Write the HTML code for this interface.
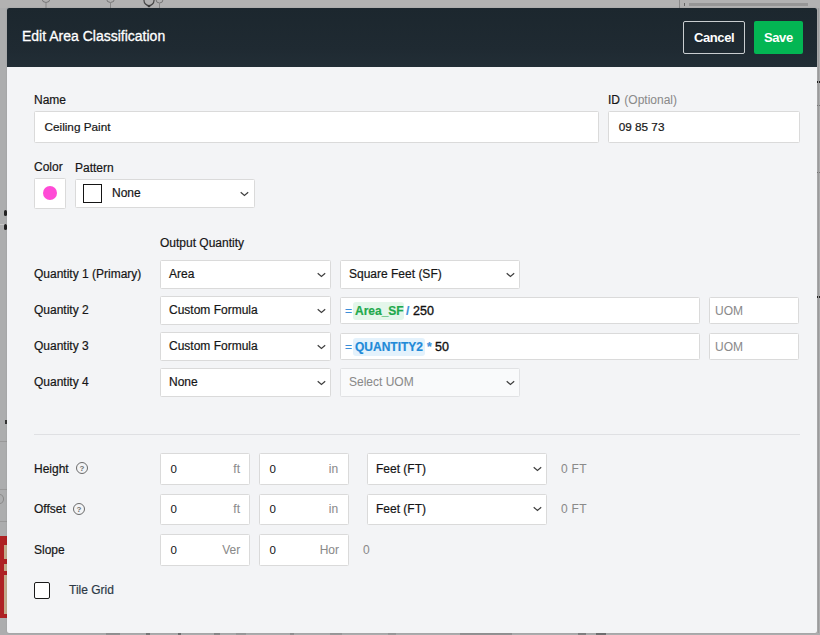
<!DOCTYPE html>
<html><head><meta charset="utf-8">
<style>
*{box-sizing:border-box;margin:0;padding:0}
html,body{width:820px;height:635px;overflow:hidden;background:#acadae;font-family:"Liberation Sans",sans-serif;color:#161616}
.a{position:absolute}
.t{position:absolute;white-space:nowrap;font-size:12px;line-height:12px;-webkit-text-stroke:0.2px currentColor}
.modal{position:absolute;left:7px;top:8px;width:810px;height:625px;background:#f3f4f6;border-radius:2px;overflow:hidden;box-shadow:0 0 1.5px rgba(0,0,0,.18)}
.hdr{position:absolute;left:0;top:0;width:810px;height:59px;background:linear-gradient(#1c272e,#1f2a32 70%,#222e36)}
.box{position:absolute;background:#fff;border:1px solid #dadada;border-radius:1.5px}
.chev{position:absolute;width:10px;height:6px}
.gray{color:#8a8a8a;-webkit-text-stroke:0.05px #8a8a8a}
</style></head><body>
<!-- background blueprint hints -->
<div class="a" style="left:5px;top:420px;width:2px;height:4px;background:#333"></div>
<div class="a" style="left:0;top:441px;width:7px;height:1px;background:#999"></div>
<div class="a" style="left:0;top:489px;width:7px;height:1px;background:#999"></div>
<div class="a" style="left:-5px;top:494px;width:9px;height:10px;border:1px solid #888;border-radius:50%"></div>
<div class="a" style="left:0;top:521px;width:7px;height:1px;background:#999"></div>
<div class="a" style="left:0;top:0;width:820px;height:8px;background:#b2b2b2"></div>
<div class="a" style="left:106px;top:633px;width:14px;height:2px;background:#777;opacity:.5"></div>
<div class="a" style="left:146px;top:633px;width:4px;height:2px;background:#444;opacity:.5"></div>
<div class="a" style="left:178px;top:633px;width:3px;height:2px;background:#333;opacity:.5"></div>
<div class="a" style="left:214px;top:633px;width:6px;height:2px;background:#666;opacity:.5"></div>
<div class="a" style="left:236px;top:633px;width:10px;height:2px;background:#888;opacity:.5"></div>
<div class="a" style="left:290px;top:633px;width:4px;height:2px;background:#777;opacity:.5"></div>
<div class="a" style="left:330px;top:633px;width:12px;height:2px;background:#888;opacity:.5"></div>
<div class="a" style="left:388px;top:633px;width:8px;height:2px;background:#888;opacity:.5"></div>
<div class="a" style="left:460px;top:633px;width:52px;height:2px;background:#7a7a7a;opacity:.5"></div>
<div class="a" style="left:578px;top:633px;width:8px;height:2px;background:#555;opacity:.5"></div>
<div class="a" style="left:596px;top:633px;width:10px;height:2px;background:#333;opacity:.5"></div>
<div class="a" style="left:0;top:536px;width:7px;height:82px;background:#ae2123"></div>
<div class="a" style="left:4px;top:545px;width:3px;height:14px;background:#c2ab8b"></div>
<div class="a" style="left:4px;top:564px;width:3px;height:7px;background:#c2ab8b"></div>
<div class="a" style="left:4px;top:575px;width:3px;height:39px;background:#c2ab8b"></div>
<div class="a" style="left:0;top:224px;width:7px;height:1px;background:#c8c8c8"></div>
<div class="a" style="left:4px;top:210px;width:3px;height:6px;background:#222;border-radius:2px"></div>
<div class="a" style="left:4px;top:224px;width:3px;height:6px;background:#222;border-radius:2px"></div>
<div class="a" style="left:679px;top:0;width:1px;height:8px;background:#8a8a8a"></div>
<div class="a" style="left:684px;top:3px;width:1px;height:3px;background:#666"></div>
<div class="a" style="left:689px;top:3px;width:119px;height:3px;background:#8a8a8a;opacity:.7"></div>
<svg class="a" style="left:38px;top:0" width="16" height="8"><circle cx="8" cy="-1.5" r="4" fill="none" stroke="#777" stroke-width="1"/><line x1="8" y1="2.5" x2="8" y2="8" stroke="#888" stroke-width="1"/></svg>
<svg class="a" style="left:102px;top:0" width="16" height="8"><circle cx="8.5" cy="-1.5" r="4" fill="none" stroke="#777" stroke-width="1"/><line x1="8.5" y1="2.5" x2="8.5" y2="8" stroke="#888" stroke-width="1"/><circle cx="-2" cy="5" r="1" fill="#777"/></svg>
<svg class="a" style="left:138px;top:0" width="30" height="8"><circle cx="11" cy="0.5" r="5" fill="none" stroke="#444" stroke-width="1.2"/><path d="M8.5 5.5 L11 7.5 L13.5 5.5Z" fill="#333"/><circle cx="21.5" cy="-0.5" r="3.5" fill="none" stroke="#777" stroke-width="1"/><line x1="21.5" y1="3" x2="21.5" y2="8" stroke="#888" stroke-width="1"/></svg>
<div class="a" style="left:817px;top:81px;width:3px;height:2px;background:#222"></div>
<div class="a" style="left:817px;top:105px;width:3px;height:1px;background:#777"></div>
<div class="a" style="left:817px;top:172px;width:3px;height:1px;background:#777"></div>
<div class="a" style="left:817px;top:296px;width:3px;height:2px;background:#222"></div>
<div class="a" style="left:818px;top:8px;width:1px;height:625px;background:#9c9c9d"></div>


<div class="modal">
  <div class="hdr"></div>
</div>

<!-- header content (absolute page coords) -->
<div class="t" style="left:22px;top:29.3px;font-size:14px;line-height:14px;color:#fff;-webkit-text-stroke:0.3px #fff">Edit Area Classification</div>
<div class="a" style="left:683px;top:21px;width:62px;height:33px;border:1px solid #c9cdd0;border-radius:2px"></div>
<div class="t" style="left:694px;top:30.7px;font-size:13px;line-height:13px;font-weight:bold;color:#fff;letter-spacing:-0.4px;-webkit-text-stroke:0">Cancel</div>
<div class="a" style="left:754px;top:21px;width:49px;height:33px;background:#03b653;border-radius:2px"></div>
<div class="t" style="left:764px;top:30.7px;font-size:13px;line-height:13px;font-weight:bold;color:#fff;letter-spacing:-0.4px;-webkit-text-stroke:0">Save</div>

<!-- Name / ID -->
<div class="t" style="left:34px;top:93.7px">Name</div>
<div class="box" style="left:34px;top:111px;width:565px;height:32px"></div>
<div class="t" style="left:44.5px;top:120.8px;font-size:11.75px;line-height:11.75px">Ceiling Paint</div>
<div class="t" style="left:608px;top:93.7px">ID <span class="gray" style="margin-left:1px">(Optional)</span></div>
<div class="box" style="left:608px;top:111px;width:192px;height:32px"></div>
<div class="t" style="left:618.7px;top:120.8px;font-size:11.75px;line-height:11.75px">09 85 73</div>

<!-- Color / Pattern -->
<div class="t" style="left:34px;top:160.7px">Color</div>
<div class="t" style="left:75px;top:161.5px">Pattern</div>
<div class="box" style="left:34px;top:178px;width:32px;height:31px"></div>
<div class="a" style="left:43px;top:186px;width:14px;height:14px;border-radius:50%;background:#ff4bd6"></div>
<div class="box" style="left:75px;top:179px;width:180px;height:29px"></div>
<div class="a" style="left:83px;top:184px;width:19px;height:19px;border:1.7px solid #151515"></div>
<div class="t" style="left:112px;top:186.6px">None</div>

<!-- Quantities -->
<div class="t" style="left:160px;top:236.6px">Output Quantity</div>
<div class="t" style="left:34px;top:267.7px">Quantity 1 (Primary)</div>
<div class="t" style="left:34px;top:303.7px">Quantity 2</div>
<div class="t" style="left:34px;top:339.7px">Quantity 3</div>
<div class="t" style="left:34px;top:375.7px">Quantity 4</div>

<div class="box" style="left:160px;top:260px;width:171px;height:29px"></div>
<div class="t" style="left:169px;top:267.7px">Area</div>
<div class="box" style="left:340px;top:260px;width:180px;height:29px"></div>
<div class="t" style="left:349px;top:267.7px">Square Feet (SF)</div>

<div class="box" style="left:160px;top:296px;width:171px;height:29px"></div>
<div class="t" style="left:169px;top:303.7px">Custom Formula</div>
<div class="box" style="left:340px;top:297px;width:360px;height:27px"></div>
<div class="box" style="left:709px;top:297px;width:90px;height:27px"></div>
<div class="t gray" style="left:715px;top:304.6px">UOM</div>

<div class="box" style="left:160px;top:332px;width:171px;height:29px"></div>
<div class="t" style="left:169px;top:339.7px">Custom Formula</div>
<div class="box" style="left:340px;top:333px;width:360px;height:27px"></div>
<div class="box" style="left:709px;top:333px;width:90px;height:27px"></div>
<div class="t gray" style="left:715px;top:340.6px">UOM</div>

<div class="box" style="left:160px;top:368px;width:171px;height:29px"></div>
<div class="t" style="left:169px;top:375.7px">None</div>
<div class="box" style="left:340px;top:368px;width:180px;height:29px;background:#f9fafb;border-color:#e1e2e4"></div>
<div class="t gray" style="left:349px;top:375.7px">Select UOM</div>

<!-- separator -->
<div class="a" style="left:34px;top:434px;width:766px;height:1px;background:#dfe0e3"></div>

<!-- Height / Offset / Slope -->
<div class="t" style="left:34px;top:462.7px">Height</div>
<div class="t" style="left:34px;top:502.7px">Offset</div>
<div class="t" style="left:34px;top:543.7px">Slope</div>

<div class="box" style="left:160px;top:453px;width:90px;height:32px"></div>
<div class="box" style="left:259px;top:453px;width:90px;height:32px"></div>
<div class="box" style="left:367px;top:453px;width:180px;height:32px"></div>
<div class="box" style="left:160px;top:494px;width:90px;height:31px"></div>
<div class="box" style="left:259px;top:494px;width:90px;height:31px"></div>
<div class="box" style="left:367px;top:494px;width:180px;height:31px"></div>
<div class="box" style="left:160px;top:534px;width:90px;height:32px"></div>
<div class="box" style="left:259px;top:534px;width:90px;height:32px"></div>

<!-- checkbox -->
<div class="a" style="left:34px;top:582px;width:16px;height:17px;border:1.6px solid #1a1a1a;border-radius:2px;background:#fff"></div>
<div class="t" style="left:69px;top:584px;color:#2c3946">Tile Grid</div>

<div class="t" style="left:345px;top:304.6px;color:#3b8fd9">=</div>
<div class="a" style="left:353px;top:302px;width:51px;height:18px;background:#e4f6ea;border-radius:3px"></div>
<div class="t" style="left:355px;top:304.6px;font-weight:bold;color:#1fa94c">Area_SF</div>
<div class="t" style="left:406px;top:304.6px;font-weight:bold;color:#3b8fd9">/</div>
<div class="t" style="left:413px;top:305px;font-size:12.5px;line-height:12.5px;color:#111;-webkit-text-stroke:0.35px #111">250</div>

<div class="t" style="left:345px;top:340.6px;color:#3b8fd9">=</div>
<div class="a" style="left:353px;top:338px;width:72px;height:18px;background:#e4f2fc;border-radius:3px"></div>
<div class="t" style="left:355px;top:340.6px;font-weight:bold;color:#1f8ad8">QUANTITY2</div>
<div class="t" style="left:427px;top:340.6px;font-weight:bold;color:#3b8fd9">*</div>
<div class="t" style="left:435px;top:341px;font-size:12.5px;line-height:12.5px;color:#111;-webkit-text-stroke:0.35px #111">50</div>

<div class="t" style="left:170.4px;top:463.87px;font-size:11.5px;line-height:11.5px;-webkit-text-stroke:0.05px">0</div>
<div class="t" style="left:269.4px;top:463.87px;font-size:11.5px;line-height:11.5px;-webkit-text-stroke:0.05px">0</div>
<div class="t" style="left:170.4px;top:503.97px;font-size:11.5px;line-height:11.5px;-webkit-text-stroke:0.05px">0</div>
<div class="t" style="left:269.4px;top:503.97px;font-size:11.5px;line-height:11.5px;-webkit-text-stroke:0.05px">0</div>
<div class="t" style="left:170.4px;top:544.97px;font-size:11.5px;line-height:11.5px;-webkit-text-stroke:0.05px">0</div>
<div class="t" style="left:269.4px;top:544.97px;font-size:11.5px;line-height:11.5px;-webkit-text-stroke:0.05px">0</div>
<div class="t gray" style="right:580px;top:462.64px">ft</div>
<div class="t gray" style="right:481.8px;top:462.64px">in</div>
<div class="t gray" style="right:580px;top:502.74px">ft</div>
<div class="t gray" style="right:481.8px;top:502.74px">in</div>
<div class="t gray" style="right:579.8px;top:543.74px">Ver</div>
<div class="t gray" style="right:481px;top:543.74px">Hor</div>
<div class="t" style="left:376px;top:463.2px">Feet (FT)</div>
<div class="t" style="left:376px;top:503.2px">Feet (FT)</div>
<div class="t gray" style="left:561px;top:463.2px;letter-spacing:0.3px">0 FT</div>
<div class="t gray" style="left:561px;top:503.2px;letter-spacing:0.3px">0 FT</div>
<div class="t gray" style="left:363px;top:544.2px">0</div>
<svg class="a" style="left:75px;top:461px" width="14" height="14" viewBox="0 0 14 14"><circle cx="7" cy="7" r="5.5" fill="none" stroke="#6b6b6b" stroke-width="1"/><text x="7" y="9.6" font-family="Liberation Sans" font-size="8" font-weight="bold" text-anchor="middle" fill="#6b6b6b">?</text></svg>
<svg class="a" style="left:72px;top:502px" width="14" height="14" viewBox="0 0 14 14"><circle cx="7" cy="7" r="5.5" fill="none" stroke="#6b6b6b" stroke-width="1"/><text x="7" y="9.6" font-family="Liberation Sans" font-size="8" font-weight="bold" text-anchor="middle" fill="#6b6b6b">?</text></svg>
<svg class="a" style="left:240px;top:190.9px" width="10" height="7" viewBox="0 0 10 7"><polyline points="0.7,1.2 4.45,4.5 8.2,1.2" fill="none" stroke="#3f3f3f" stroke-width="1.2"/></svg>
<svg class="a" style="left:317px;top:272.2px" width="10" height="7" viewBox="0 0 10 7"><polyline points="0.7,1.2 4.45,4.5 8.2,1.2" fill="none" stroke="#3f3f3f" stroke-width="1.2"/></svg>
<svg class="a" style="left:317px;top:308.2px" width="10" height="7" viewBox="0 0 10 7"><polyline points="0.7,1.2 4.45,4.5 8.2,1.2" fill="none" stroke="#3f3f3f" stroke-width="1.2"/></svg>
<svg class="a" style="left:317px;top:344.2px" width="10" height="7" viewBox="0 0 10 7"><polyline points="0.7,1.2 4.45,4.5 8.2,1.2" fill="none" stroke="#3f3f3f" stroke-width="1.2"/></svg>
<svg class="a" style="left:317px;top:380.2px" width="10" height="7" viewBox="0 0 10 7"><polyline points="0.7,1.2 4.45,4.5 8.2,1.2" fill="none" stroke="#3f3f3f" stroke-width="1.2"/></svg>
<svg class="a" style="left:506px;top:272.2px" width="10" height="7" viewBox="0 0 10 7"><polyline points="0.7,1.2 4.45,4.5 8.2,1.2" fill="none" stroke="#3f3f3f" stroke-width="1.2"/></svg>
<svg class="a" style="left:506px;top:380.2px" width="10" height="7" viewBox="0 0 10 7"><polyline points="0.7,1.2 4.45,4.5 8.2,1.2" fill="none" stroke="#3f3f3f" stroke-width="1.2"/></svg>
<svg class="a" style="left:533px;top:466.2px" width="10" height="7" viewBox="0 0 10 7"><polyline points="0.7,1.2 4.45,4.5 8.2,1.2" fill="none" stroke="#3f3f3f" stroke-width="1.2"/></svg>
<svg class="a" style="left:533px;top:506.2px" width="10" height="7" viewBox="0 0 10 7"><polyline points="0.7,1.2 4.45,4.5 8.2,1.2" fill="none" stroke="#3f3f3f" stroke-width="1.2"/></svg>
</body></html>
